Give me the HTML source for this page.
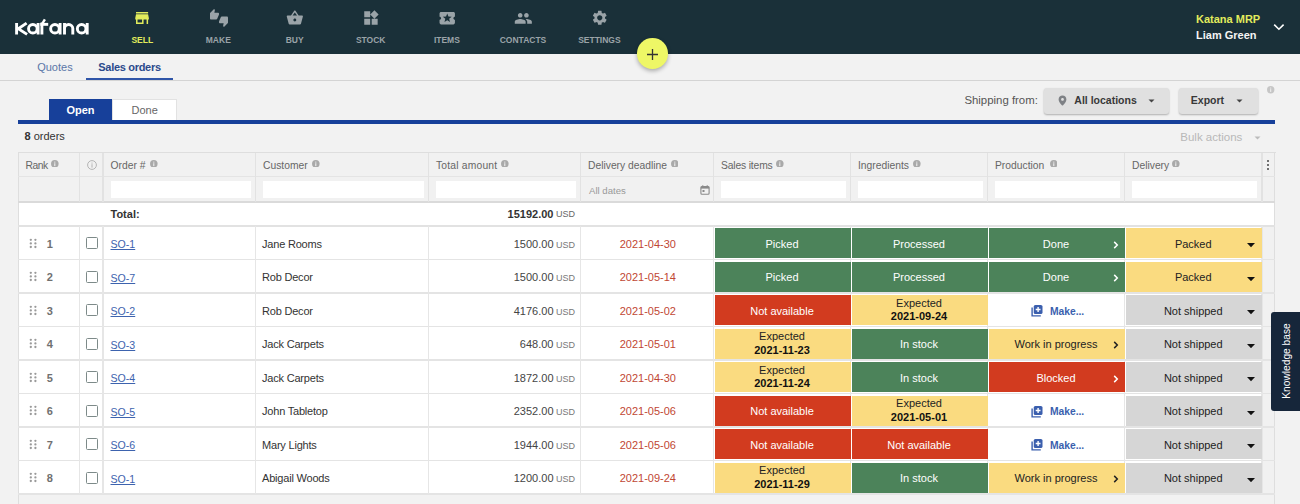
<!DOCTYPE html>
<html><head><meta charset="utf-8"><style>
*{box-sizing:border-box;margin:0;padding:0}
html,body{width:1300px;height:504px;overflow:hidden;background:#f2f2f2;font-family:"Liberation Sans", sans-serif;color:#333;position:relative}
.a{position:absolute}
.t{position:absolute;white-space:nowrap;line-height:1}
</style></head><body>
<div class="a" style="left:0.00px;top:0.00px;width:1300.00px;height:54.00px;background:#1a3039;"></div>
<svg class="a" style="left:0.00px;top:0.00px;" width="100.00" height="54.00" viewBox="0 0 100 54"><g fill="none" stroke="#fff" stroke-width="2.9">
<path d="M16.6 23V34.5"/><path d="M26.6 23.1L18.3 28.75L27.1 34.4"/>
<circle cx="32.85" cy="28.75" r="4.3"/><path d="M38.1 23V34.5"/>
<path d="M41.9 22.6V34.5"/><path d="M40.3 24.35H48.2"/><path d="M42.3 23.6L44.9 19.3" stroke-width="2.4"/>
<circle cx="54.95" cy="28.75" r="4.3"/><path d="M60.1 23V34.5"/>
<path d="M64.5 23V34.5"/><path d="M64.5 28.6A4.15 4.15 0 0 1 72.8 28.6V34.5"/>
<circle cx="81.65" cy="28.75" r="4.3"/><path d="M87.2 23V34.5"/>
</g></svg>
<svg class="a" style="left:133.40px;top:8.90px;" width="18.14" height="18.14" viewBox="0 0 24 24"><path fill="#e2ec5c" d="M20 4H4v2h16V4zm1 10v-2l-1-5H4l-1 5v2h1v6h10v-6h4v6h2v-6h1zm-9 4H6v-4h6v4z"/></svg>
<div class="t" style="left:-57.70px;width:400px;text-align:center;top:36.10px;font-size:8.5px;font-weight:700;color:#e2ec5c;">SELL</div>
<svg class="a" style="left:209.70px;top:9.00px;" width="18.00" height="18.00" viewBox="0 0 24 24"><path fill="#9aa3a8" d="M12 6c0-.55-.45-1-1-1H5.82l.66-3.18.02-.23c0-.31-.13-.59-.33-.8L5.38 0 .44 4.94C.17 5.210 0 5.59 0 6v6.5c0 .83.67 1.5 1.5 1.5h6.75c.62 0 1.15-.38 1.38-.91l2.26-5.29c.07-.17.11-.36.11-.55V6zm10.5 4h-6.75c-.62 0-1.15.38-1.38.91l-2.26 5.29c-.07.17-.11.36-.11.55V18c0 .55.45 1 1 1h5.18l-.66 3.18-.02.24c0 .31.13.59.33.8l.79.78 4.94-4.94c.27-.27.44-.65.44-1.06v-6.5c0-.83-.67-1.5-1.5-1.5z"/></svg>
<div class="t" style="left:18.30px;width:400px;text-align:center;top:36.10px;font-size:8.5px;font-weight:700;color:#9aa3a8;">MAKE</div>
<svg class="a" style="left:286.00px;top:9.00px;" width="17.66" height="17.66" viewBox="0 0 24 24"><path fill="#9aa3a8" d="M17.21 9l-4.38-6.56c-.19-.28-.51-.42-.83-.42-.32 0-.64.14-.83.43L6.790 9H2c-.55 0-1 .45-1 1 0 .09.01.18.04.27l2.54 9.27c.23.84 1 1.46 1.92 1.46h13c.92 0 1.69-.62 1.93-1.46l2.54-9.270L23 10c0-.55-.45-1-1-1h-4.79zM9 9l3-4.4L15 9H9zm3 8c-1.1 0-2-.9-2-2s.9-2 2-2 2 .9 2 2-.9 2-2 2z"/></svg>
<div class="t" style="left:94.70px;width:400px;text-align:center;top:36.10px;font-size:8.5px;font-weight:700;color:#9aa3a8;">BUY</div>
<svg class="a" style="left:361.70px;top:8.90px;" width="17.90" height="17.90" viewBox="0 0 24 24"><path fill="#9aa3a8" d="M13 13v8h8v-8h-8zM3 21h8v-8H3v8zM3 3v8h8V3H3zm13.66-1.31L11 7.34 16.66 13l5.65-5.66-5.65-5.65z"/></svg>
<div class="t" style="left:170.70px;width:400px;text-align:center;top:36.10px;font-size:8.5px;font-weight:700;color:#9aa3a8;">STOCK</div>
<svg class="a" style="left:437.90px;top:8.80px;" width="18.48" height="18.48" viewBox="0 0 24 24"><path fill="#9aa3a8" d="M20 12c0-1.1.9-2 2-2V6c0-1.1-.9-2-2-2H4c-1.1 0-1.99.9-1.99 2v4c1.1 0 1.99.9 1.99 2s-.89 2-2 2v4c0 1.1.9 2 2 2h16c1.1 0 2-.9 2-2v-4c-1.1 0-2-.9-2-2zm-4.42 4.8L12 14.5l-3.58 2.3 1.08-4.12-3.29-2.690 4.24-.25L12 5.8l1.54 3.95 4.24.25-3.29 2.69 1.09 4.11z"/></svg>
<div class="t" style="left:246.90px;width:400px;text-align:center;top:36.10px;font-size:8.5px;font-weight:700;color:#9aa3a8;">ITEMS</div>
<svg class="a" style="left:514.10px;top:8.50px;" width="18.65" height="18.65" viewBox="0 0 24 24"><path fill="#9aa3a8" d="M16 11c1.66 0 2.99-1.34 2.99-3S17.66 5 16 5c-1.66 0-3 1.34-3 3s1.34 3 3 3zm-8 0c1.66 0 2.99-1.34 2.99-3S9.66 5 8 5C6.34 5 5 6.34 5 8s1.34 3 3 3zm0 2c-2.33 0-7 1.17-7 3.5V19h14v-2.5c0-2.33-4.67-3.5-7-3.5zm8 0c-.29 0-.62.02-.97.05 1.16.84 1.97 1.970 1.97 3.45V19h6v-2.5c0-2.33-4.67-3.5-7-3.5z"/></svg>
<div class="t" style="left:323.00px;width:400px;text-align:center;top:36.10px;font-size:8.5px;font-weight:700;color:#9aa3a8;">CONTACTS</div>
<svg class="a" style="left:590.70px;top:9.20px;" width="17.52" height="17.52" viewBox="0 0 24 24"><path fill="#9aa3a8" d="M19.14 12.94c.04-.3.06-.61.06-.94 0-.32-.02-.64-.07-.94l2.03-1.58c.18-.14.23-.41.12-.61l-1.92-3.32c-.12-.22-.37-.29-.59-.22l-2.39.96c-.5-.38-1.03-.7-1.62-.94l-.36-2.54c-.04-.24-.24-.41-.48-.41h-3.84c-.24 0-.43.17-.47.41l-.36 2.54c-.59.24-1.13.57-1.62.94l-2.39-.96c-.22-.08-.47 0-.59.22L2.74 8.87c-.12.21-.08.47.12.61l2.03 1.58c-.05.3-.09.63-.09.94s.02.64.07.94l-2.03 1.58c-.18.14-.23.41-.12.61l1.92 3.32c.12.22.37.29.59.22l2.39-.96c.5.38 1.03.7 1.62.94l.36 2.54c.05.24.24.41.48.41h3.84c.24 0 .44-.17.47-.41l.36-2.54c.59-.24 1.13-.56 1.62-.94l2.39.96c.22.08.47 0 .59-.22l1.92-3.32c.12-.22.07-.47-.12-.61l-2.01-1.58zM12 15.6c-1.98 0-3.6-1.62-3.6-3.6s1.62-3.6 3.6-3.6 3.6 1.62 3.6 3.6-1.62 3.6-3.6 3.6z"/></svg>
<div class="t" style="left:399.40px;width:400px;text-align:center;top:36.10px;font-size:8.5px;font-weight:700;color:#9aa3a8;">SETTINGS</div>
<div class="t" style="left:1196.00px;top:13.89px;font-size:11px;font-weight:700;color:#e2ec5c;">Katana MRP</div>
<div class="t" style="left:1196.00px;top:29.79px;font-size:11px;font-weight:700;color:#f4f4f4;">Liam Green</div>
<svg class="a" style="left:1272.00px;top:22.00px;" width="14.00" height="10.00" viewBox="0 0 14 10"><path d="M2.2 2.6L6.9 7.2L11.6 2.6" fill="none" stroke="#fff" stroke-width="1.6"/></svg>
<div class="a" style="left:0.00px;top:80.00px;width:1300.00px;height:1.20px;background:#d4d4d4;"></div>
<div class="t" style="left:37.20px;top:61.79px;font-size:11px;font-weight:400;color:#5b77a8;">Quotes</div>
<div class="t" style="left:98.30px;top:61.79px;font-size:11px;font-weight:700;color:#2b4a8c;letter-spacing:-0.3px">Sales orders</div>
<div class="a" style="left:86.20px;top:77.70px;width:86.80px;height:2.60px;background:#2f55a8;"></div>
<div class="a" style="left:637px;top:38.4px;width:30.8px;height:30.6px;border-radius:50%;background:#eef766;box-shadow:0 2px 4px rgba(0,0,0,0.3)"></div>
<svg class="a" style="left:647.30px;top:48.80px;" width="11.00" height="11.00" viewBox="0 0 11 11"><path d="M5.5 0V11M0 5.5H11" stroke="#333" stroke-width="1.3"/></svg>
<div class="a" style="left:48.80px;top:98.90px;width:63.40px;height:23.00px;background:#17409a;"></div>
<div class="a" style="left:112.20px;top:98.90px;width:64.40px;height:22.00px;background:#fff;border:1px solid #e2e2e2;border-bottom:none"></div>
<div class="t" style="left:-119.50px;width:400px;text-align:center;top:105.09px;font-size:11px;font-weight:700;color:#fff;">Open</div>
<div class="t" style="left:-55.30px;width:400px;text-align:center;top:105.09px;font-size:11px;font-weight:400;color:#666;">Done</div>
<div class="a" style="left:18.00px;top:120.00px;width:1257.00px;height:4.00px;background:#17409a;"></div>
<div class="t" style="left:964.40px;top:94.65px;font-size:11.4px;font-weight:400;color:#555;">Shipping from:</div>
<div class="a" style="left:1043.5px;top:88.4px;width:125.5px;height:26px;border-radius:3px;background:#e0e0e0;box-shadow:0 1px 2px rgba(0,0,0,0.28)"></div>
<svg class="a" style="left:1057.50px;top:95.00px;" width="9.00" height="11.00" viewBox="0 0 9 11"><path fill="#7e8185" d="M4.5 0.5C2.3 0.5 0.6 2.2 0.6 4.4C0.6 7.3 4.5 10.6 4.5 10.6S8.4 7.3 8.4 4.4C8.4 2.2 6.7 0.5 4.5 0.5ZM4.5 5.8C3.7 5.8 3.1 5.2 3.1 4.4S3.7 3 4.5 3S5.9 3.6 5.9 4.4S5.3 5.8 4.5 5.8Z"/></svg>
<div class="t" style="left:1074.30px;top:95.41px;font-size:10.5px;font-weight:700;color:#383838;">All locations</div>
<svg class="a" style="left:1147.50px;top:98.50px;" width="7.00" height="4.00" viewBox="0 0 7 4"><path d="M0.5 0.5H6.5L3.5 3.5Z" fill="#444"/></svg>
<div class="a" style="left:1179px;top:88.4px;width:78.6px;height:26px;border-radius:3px;background:#e0e0e0;box-shadow:0 1px 2px rgba(0,0,0,0.28)"></div>
<div class="t" style="left:1190.80px;top:95.41px;font-size:10.5px;font-weight:700;color:#383838;">Export</div>
<svg class="a" style="left:1235.50px;top:98.50px;" width="7.00" height="4.00" viewBox="0 0 7 4"><path d="M0.5 0.5H6.5L3.5 3.5Z" fill="#444"/></svg>
<svg class="a" style="left:1267.30px;top:86.30px;" width="7.40" height="7.40" viewBox="0 0 8 8"><circle cx="4" cy="4" r="4" fill="#c6c6c6"/><rect x="3.45" y="3.4" width="1.1" height="3" fill="#f2f2f2"/><rect x="3.45" y="1.7" width="1.1" height="1.1" fill="#f2f2f2"/></svg>
<div class="t" style="left:24.50px;top:131.09px;font-size:11px;font-weight:400;color:#333;"><b>8</b> orders</div>
<div class="t" style="left:1180.30px;top:131.67px;font-size:11.5px;font-weight:400;color:#b8b8b8;">Bulk actions</div>
<svg class="a" style="left:1254.00px;top:136.00px;" width="7.00" height="4.00" viewBox="0 0 7 4"><path d="M0.5 0.5H6.5L3.5 3.5Z" fill="#bbb"/></svg>
<div class="a" style="left:18.00px;top:152.50px;width:1256.50px;height:49.00px;background:#f1f1f1;"></div>
<div class="a" style="left:18.00px;top:201.50px;width:1256.50px;height:292.50px;background:#fff;"></div>
<div class="a" style="left:1262.00px;top:226.00px;width:12.50px;height:268.00px;background:#f1f1f1;"></div>
<div class="a" style="left:18.00px;top:152.00px;width:1257.50px;height:1.20px;background:#dedede;"></div>
<div class="a" style="left:18.00px;top:152.00px;width:1.20px;height:352.00px;background:#dedede;"></div>
<div class="a" style="left:1274.00px;top:152.00px;width:1.20px;height:352.00px;background:#dedede;"></div>
<div class="a" style="left:18.00px;top:176.00px;width:1256.50px;height:1.20px;background:#e4e4e4;"></div>
<div class="a" style="left:18.00px;top:201.00px;width:1256.50px;height:1.50px;background:#dadada;"></div>
<div class="a" style="left:18.00px;top:225.00px;width:1256.50px;height:1.60px;background:#e2e2e2;"></div>
<div class="a" style="left:18.00px;top:258.70px;width:1256.50px;height:1.60px;background:#e4e4e4;"></div>
<div class="a" style="left:18.00px;top:292.20px;width:1256.50px;height:1.60px;background:#e4e4e4;"></div>
<div class="a" style="left:18.00px;top:325.70px;width:1256.50px;height:1.60px;background:#e4e4e4;"></div>
<div class="a" style="left:18.00px;top:359.20px;width:1256.50px;height:1.60px;background:#e4e4e4;"></div>
<div class="a" style="left:18.00px;top:392.70px;width:1256.50px;height:1.60px;background:#e4e4e4;"></div>
<div class="a" style="left:18.00px;top:426.20px;width:1256.50px;height:1.60px;background:#e4e4e4;"></div>
<div class="a" style="left:18.00px;top:459.70px;width:1256.50px;height:1.60px;background:#e4e4e4;"></div>
<div class="a" style="left:18.00px;top:493.20px;width:1256.50px;height:1.60px;background:#e4e4e4;"></div>
<div class="a" style="left:78.90px;top:152.50px;width:1.20px;height:49.00px;background:#e2e2e2;"></div>
<div class="a" style="left:102.40px;top:152.50px;width:1.20px;height:49.00px;background:#e2e2e2;"></div>
<div class="a" style="left:254.90px;top:152.50px;width:1.20px;height:49.00px;background:#e2e2e2;"></div>
<div class="a" style="left:427.90px;top:152.50px;width:1.20px;height:49.00px;background:#e2e2e2;"></div>
<div class="a" style="left:579.90px;top:152.50px;width:1.20px;height:49.00px;background:#e2e2e2;"></div>
<div class="a" style="left:712.90px;top:152.50px;width:1.20px;height:49.00px;background:#e2e2e2;"></div>
<div class="a" style="left:849.90px;top:152.50px;width:1.20px;height:49.00px;background:#e2e2e2;"></div>
<div class="a" style="left:986.90px;top:152.50px;width:1.20px;height:49.00px;background:#e2e2e2;"></div>
<div class="a" style="left:1123.90px;top:152.50px;width:1.20px;height:49.00px;background:#e2e2e2;"></div>
<div class="a" style="left:1261.40px;top:152.50px;width:1.20px;height:49.00px;background:#e2e2e2;"></div>
<div class="a" style="left:78.90px;top:226.00px;width:1.20px;height:268.00px;background:#e6e6e6;"></div>
<div class="a" style="left:102.40px;top:226.00px;width:1.20px;height:268.00px;background:#e6e6e6;"></div>
<div class="a" style="left:254.90px;top:226.00px;width:1.20px;height:268.00px;background:#e6e6e6;"></div>
<div class="a" style="left:427.90px;top:226.00px;width:1.20px;height:268.00px;background:#e6e6e6;"></div>
<div class="a" style="left:579.90px;top:226.00px;width:1.20px;height:268.00px;background:#e6e6e6;"></div>
<div class="a" style="left:712.90px;top:226.00px;width:1.20px;height:268.00px;background:#e6e6e6;"></div>
<div class="a" style="left:849.90px;top:226.00px;width:1.20px;height:268.00px;background:#e6e6e6;"></div>
<div class="a" style="left:986.90px;top:226.00px;width:1.20px;height:268.00px;background:#e6e6e6;"></div>
<div class="a" style="left:1123.90px;top:226.00px;width:1.20px;height:268.00px;background:#e6e6e6;"></div>
<div class="a" style="left:1261.40px;top:226.00px;width:1.20px;height:268.00px;background:#e6e6e6;"></div>
<div class="t" style="left:25.50px;top:161.08px;font-size:10.3px;color:#666;letter-spacing:-0.45px">Rank</div>
<svg class="a" style="left:51.30px;top:159.50px;" width="7.60" height="7.60" viewBox="0 0 8 8"><circle cx="4" cy="4" r="4" fill="#a9a9a9"/><rect x="3.45" y="3.4" width="1.1" height="3" fill="#f1f1f1"/><rect x="3.45" y="1.7" width="1.1" height="1.1" fill="#f1f1f1"/></svg>
<svg class="a" style="left:87.00px;top:160.40px;" width="10.00" height="10.00" viewBox="0 0 10 10"><circle cx="5" cy="5" r="4.4" fill="none" stroke="#b4b4b4" stroke-width="1"/><rect x="4.5" y="4.2" width="1" height="3.4" fill="#b4b4b4"/><rect x="4.5" y="2.6" width="1" height="1" fill="#b4b4b4"/></svg>
<div class="t" style="left:110.50px;top:161.08px;font-size:10.3px;color:#666;letter-spacing:0px">Order #</div>
<svg class="a" style="left:150.20px;top:159.50px;" width="7.60" height="7.60" viewBox="0 0 8 8"><circle cx="4" cy="4" r="4" fill="#a9a9a9"/><rect x="3.45" y="3.4" width="1.1" height="3" fill="#f1f1f1"/><rect x="3.45" y="1.7" width="1.1" height="1.1" fill="#f1f1f1"/></svg>
<div class="t" style="left:263.00px;top:161.08px;font-size:10.3px;color:#666;letter-spacing:0px">Customer</div>
<svg class="a" style="left:312.00px;top:159.50px;" width="7.60" height="7.60" viewBox="0 0 8 8"><circle cx="4" cy="4" r="4" fill="#a9a9a9"/><rect x="3.45" y="3.4" width="1.1" height="3" fill="#f1f1f1"/><rect x="3.45" y="1.7" width="1.1" height="1.1" fill="#f1f1f1"/></svg>
<div class="t" style="left:436.00px;top:161.08px;font-size:10.3px;color:#666;letter-spacing:0.2px">Total amount</div>
<svg class="a" style="left:501.20px;top:159.50px;" width="7.60" height="7.60" viewBox="0 0 8 8"><circle cx="4" cy="4" r="4" fill="#a9a9a9"/><rect x="3.45" y="3.4" width="1.1" height="3" fill="#f1f1f1"/><rect x="3.45" y="1.7" width="1.1" height="1.1" fill="#f1f1f1"/></svg>
<div class="t" style="left:588.00px;top:161.08px;font-size:10.3px;color:#666;letter-spacing:0px">Delivery deadline</div>
<svg class="a" style="left:670.90px;top:159.50px;" width="7.60" height="7.60" viewBox="0 0 8 8"><circle cx="4" cy="4" r="4" fill="#a9a9a9"/><rect x="3.45" y="3.4" width="1.1" height="3" fill="#f1f1f1"/><rect x="3.45" y="1.7" width="1.1" height="1.1" fill="#f1f1f1"/></svg>
<div class="t" style="left:721.00px;top:161.08px;font-size:10.3px;color:#666;letter-spacing:-0.15px">Sales items</div>
<svg class="a" style="left:775.95px;top:159.50px;" width="7.60" height="7.60" viewBox="0 0 8 8"><circle cx="4" cy="4" r="4" fill="#a9a9a9"/><rect x="3.45" y="3.4" width="1.1" height="3" fill="#f1f1f1"/><rect x="3.45" y="1.7" width="1.1" height="1.1" fill="#f1f1f1"/></svg>
<div class="t" style="left:858.00px;top:161.08px;font-size:10.3px;color:#666;letter-spacing:0px">Ingredients</div>
<svg class="a" style="left:913.10px;top:159.50px;" width="7.60" height="7.60" viewBox="0 0 8 8"><circle cx="4" cy="4" r="4" fill="#a9a9a9"/><rect x="3.45" y="3.4" width="1.1" height="3" fill="#f1f1f1"/><rect x="3.45" y="1.7" width="1.1" height="1.1" fill="#f1f1f1"/></svg>
<div class="t" style="left:995.00px;top:161.08px;font-size:10.3px;color:#666;letter-spacing:0px">Production</div>
<svg class="a" style="left:1049.50px;top:159.50px;" width="7.60" height="7.60" viewBox="0 0 8 8"><circle cx="4" cy="4" r="4" fill="#a9a9a9"/><rect x="3.45" y="3.4" width="1.1" height="3" fill="#f1f1f1"/><rect x="3.45" y="1.7" width="1.1" height="1.1" fill="#f1f1f1"/></svg>
<div class="t" style="left:1132.00px;top:161.08px;font-size:10.3px;color:#666;letter-spacing:0px">Delivery</div>
<svg class="a" style="left:1172.45px;top:159.50px;" width="7.60" height="7.60" viewBox="0 0 8 8"><circle cx="4" cy="4" r="4" fill="#a9a9a9"/><rect x="3.45" y="3.4" width="1.1" height="3" fill="#f1f1f1"/><rect x="3.45" y="1.7" width="1.1" height="1.1" fill="#f1f1f1"/></svg>
<div class="a" style="left:1266.8px;top:160.0px;width:2.4px;height:2.4px;border-radius:50%;background:#444"></div>
<div class="a" style="left:1266.8px;top:164.0px;width:2.4px;height:2.4px;border-radius:50%;background:#444"></div>
<div class="a" style="left:1266.8px;top:168.0px;width:2.4px;height:2.4px;border-radius:50%;background:#444"></div>
<div class="a" style="left:110.50px;top:181.00px;width:140.00px;height:16.50px;background:#fff;"></div>
<div class="a" style="left:263.00px;top:181.00px;width:160.50px;height:16.50px;background:#fff;"></div>
<div class="a" style="left:436.00px;top:181.00px;width:139.50px;height:16.50px;background:#fff;"></div>
<div class="a" style="left:721.00px;top:181.00px;width:124.50px;height:16.50px;background:#fff;"></div>
<div class="a" style="left:858.00px;top:181.00px;width:124.50px;height:16.50px;background:#fff;"></div>
<div class="a" style="left:995.00px;top:181.00px;width:124.50px;height:16.50px;background:#fff;"></div>
<div class="a" style="left:1132.00px;top:181.00px;width:125.00px;height:16.50px;background:#fff;"></div>
<div class="t" style="left:589.00px;top:186.07px;font-size:9.6px;font-weight:400;color:#999;">All dates</div>
<svg class="a" style="left:699.50px;top:185.00px;" width="10.00" height="10.00" viewBox="0 0 10 10"><rect x="0.9" y="1.6" width="8.2" height="7.6" rx="1" fill="none" stroke="#8a8a8a" stroke-width="1.1"/><rect x="0.9" y="1.6" width="8.2" height="2" fill="#8a8a8a"/><rect x="2.3" y="0.2" width="1" height="2" fill="#8a8a8a"/><rect x="6.7" y="0.2" width="1" height="2" fill="#8a8a8a"/><rect x="2.5" y="5" width="2" height="2" fill="#8a8a8a"/></svg>
<div class="t" style="left:110.50px;top:208.79px;font-size:11px;font-weight:700;color:#333;">Total:</div>
<div class="t" style="left:153.50px;width:400px;text-align:right;top:208.79px;font-size:11px;font-weight:700;color:#333;">15192.00</div>
<div class="t" style="left:175.00px;width:400px;text-align:right;top:210.48px;font-size:9px;font-weight:400;color:#666;">USD</div>
<svg class="a" style="left:28.50px;top:237.80px;" width="9.00" height="11.00" viewBox="0 0 9 11"><g fill="#9a9a9a"><circle cx="1.8" cy="1.8" r="1.15"/><circle cx="6.4" cy="1.8" r="1.15"/><circle cx="1.8" cy="5.4" r="1.15"/><circle cx="6.4" cy="5.4" r="1.15"/><circle cx="1.8" cy="9" r="1.15"/><circle cx="6.4" cy="9" r="1.15"/></g></svg>
<div class="t" style="left:46.80px;top:238.99px;font-size:11px;font-weight:700;color:#707070;">1</div>
<div class="a" style="left:86px;top:237.2px;width:12.2px;height:12px;border:1.5px solid #7d8a89;border-radius:1.5px"></div>
<div class="t" style="left:110.50px;top:239.33px;font-size:10.6px;font-weight:400;color:#3d63ae;text-decoration:underline;text-underline-offset:1.2px;text-decoration-thickness:1px">SO-1</div>
<div class="t" style="left:262.00px;top:238.99px;font-size:11px;font-weight:400;color:#333;letter-spacing:-0.2px">Jane Rooms</div>
<div class="t" style="left:153.50px;width:400px;text-align:right;top:238.99px;font-size:11px;font-weight:400;color:#444;">1500.00</div>
<div class="t" style="left:175.00px;width:400px;text-align:right;top:240.68px;font-size:9px;font-weight:400;color:#777;">USD</div>
<div class="t" style="left:447.80px;width:400px;text-align:center;top:238.99px;font-size:11px;font-weight:400;color:#bf4733;">2021-04-30</div>
<div class="a" style="left:715.00px;top:228.00px;width:135.70px;height:30.30px;background:#4c835a;"></div>
<div class="t" style="left:582.00px;width:400px;text-align:center;top:238.99px;font-size:11px;font-weight:400;color:#fff;">Picked</div>
<div class="a" style="left:852.00px;top:228.00px;width:135.70px;height:30.30px;background:#4c835a;"></div>
<div class="t" style="left:719.00px;width:400px;text-align:center;top:238.99px;font-size:11px;font-weight:400;color:#fff;">Processed</div>
<div class="a" style="left:989.00px;top:228.00px;width:135.70px;height:30.30px;background:#4c835a;"></div>
<div class="t" style="left:856.00px;width:400px;text-align:center;top:238.99px;font-size:11px;font-weight:400;color:#fff;">Done</div>
<svg class="a" style="left:1113.40px;top:240.50px;" width="6.00" height="8.00" viewBox="0 0 6 8"><path d="M1.2 0.9L4.3 4L1.2 7.1" fill="none" stroke="#fff" stroke-width="1.5"/></svg>
<div class="a" style="left:1126.00px;top:228.00px;width:136.20px;height:30.30px;background:#fadb80;"></div>
<div class="t" style="left:993.25px;width:400px;text-align:center;top:238.99px;font-size:11px;font-weight:400;color:#222;">Packed</div>
<svg class="a" style="left:1247.00px;top:243.00px;" width="8.00" height="4.50" viewBox="0 0 8 4.5"><path d="M0 0H8L4 4.2Z" fill="#111"/></svg>
<svg class="a" style="left:28.50px;top:271.30px;" width="9.00" height="11.00" viewBox="0 0 9 11"><g fill="#9a9a9a"><circle cx="1.8" cy="1.8" r="1.15"/><circle cx="6.4" cy="1.8" r="1.15"/><circle cx="1.8" cy="5.4" r="1.15"/><circle cx="6.4" cy="5.4" r="1.15"/><circle cx="1.8" cy="9" r="1.15"/><circle cx="6.4" cy="9" r="1.15"/></g></svg>
<div class="t" style="left:46.80px;top:272.49px;font-size:11px;font-weight:700;color:#707070;">2</div>
<div class="a" style="left:86px;top:270.7px;width:12.2px;height:12px;border:1.5px solid #7d8a89;border-radius:1.5px"></div>
<div class="t" style="left:110.50px;top:272.83px;font-size:10.6px;font-weight:400;color:#3d63ae;text-decoration:underline;text-underline-offset:1.2px;text-decoration-thickness:1px">SO-7</div>
<div class="t" style="left:262.00px;top:272.49px;font-size:11px;font-weight:400;color:#333;letter-spacing:-0.2px">Rob Decor</div>
<div class="t" style="left:153.50px;width:400px;text-align:right;top:272.49px;font-size:11px;font-weight:400;color:#444;">1500.00</div>
<div class="t" style="left:175.00px;width:400px;text-align:right;top:274.18px;font-size:9px;font-weight:400;color:#777;">USD</div>
<div class="t" style="left:447.80px;width:400px;text-align:center;top:272.49px;font-size:11px;font-weight:400;color:#bf4733;">2021-05-14</div>
<div class="a" style="left:715.00px;top:261.50px;width:135.70px;height:30.30px;background:#4c835a;"></div>
<div class="t" style="left:582.00px;width:400px;text-align:center;top:272.49px;font-size:11px;font-weight:400;color:#fff;">Picked</div>
<div class="a" style="left:852.00px;top:261.50px;width:135.70px;height:30.30px;background:#4c835a;"></div>
<div class="t" style="left:719.00px;width:400px;text-align:center;top:272.49px;font-size:11px;font-weight:400;color:#fff;">Processed</div>
<div class="a" style="left:989.00px;top:261.50px;width:135.70px;height:30.30px;background:#4c835a;"></div>
<div class="t" style="left:856.00px;width:400px;text-align:center;top:272.49px;font-size:11px;font-weight:400;color:#fff;">Done</div>
<svg class="a" style="left:1113.40px;top:274.00px;" width="6.00" height="8.00" viewBox="0 0 6 8"><path d="M1.2 0.9L4.3 4L1.2 7.1" fill="none" stroke="#fff" stroke-width="1.5"/></svg>
<div class="a" style="left:1126.00px;top:261.50px;width:136.20px;height:30.30px;background:#fadb80;"></div>
<div class="t" style="left:993.25px;width:400px;text-align:center;top:272.49px;font-size:11px;font-weight:400;color:#222;">Packed</div>
<svg class="a" style="left:1247.00px;top:276.50px;" width="8.00" height="4.50" viewBox="0 0 8 4.5"><path d="M0 0H8L4 4.2Z" fill="#111"/></svg>
<svg class="a" style="left:28.50px;top:304.80px;" width="9.00" height="11.00" viewBox="0 0 9 11"><g fill="#9a9a9a"><circle cx="1.8" cy="1.8" r="1.15"/><circle cx="6.4" cy="1.8" r="1.15"/><circle cx="1.8" cy="5.4" r="1.15"/><circle cx="6.4" cy="5.4" r="1.15"/><circle cx="1.8" cy="9" r="1.15"/><circle cx="6.4" cy="9" r="1.15"/></g></svg>
<div class="t" style="left:46.80px;top:305.99px;font-size:11px;font-weight:700;color:#707070;">3</div>
<div class="a" style="left:86px;top:304.2px;width:12.2px;height:12px;border:1.5px solid #7d8a89;border-radius:1.5px"></div>
<div class="t" style="left:110.50px;top:306.33px;font-size:10.6px;font-weight:400;color:#3d63ae;text-decoration:underline;text-underline-offset:1.2px;text-decoration-thickness:1px">SO-2</div>
<div class="t" style="left:262.00px;top:305.99px;font-size:11px;font-weight:400;color:#333;letter-spacing:-0.2px">Rob Decor</div>
<div class="t" style="left:153.50px;width:400px;text-align:right;top:305.99px;font-size:11px;font-weight:400;color:#444;">4176.00</div>
<div class="t" style="left:175.00px;width:400px;text-align:right;top:307.68px;font-size:9px;font-weight:400;color:#777;">USD</div>
<div class="t" style="left:447.80px;width:400px;text-align:center;top:305.99px;font-size:11px;font-weight:400;color:#bf4733;">2021-05-02</div>
<div class="a" style="left:715.00px;top:295.00px;width:135.70px;height:30.30px;background:#d23b1f;"></div>
<div class="t" style="left:582.00px;width:400px;text-align:center;top:305.99px;font-size:11px;font-weight:400;color:#fff;">Not available</div>
<div class="a" style="left:852.00px;top:295.00px;width:135.70px;height:30.30px;background:#fadb80;"></div>
<div class="t" style="left:719.00px;width:400px;text-align:center;top:297.59px;font-size:11px;font-weight:400;color:#222;">Expected</div>
<div class="t" style="left:719.00px;width:400px;text-align:center;top:311.29px;font-size:11px;font-weight:700;color:#111;">2021-09-24</div>
<svg class="a" style="left:1030.50px;top:305.30px;" width="12.50" height="12.00" viewBox="0 0 12.5 12"><path d="M1.1 2.4V10.9H9.8" fill="none" stroke="#3b5fae" stroke-width="1.4"/><rect x="2.75" y="0" width="8.75" height="9" rx="1.6" fill="#3b5fae"/><path d="M7.1 2.1V6.9M4.7 4.5H9.5" stroke="#fff" stroke-width="1.4"/></svg>
<div class="t" style="left:1049.90px;top:306.58px;font-size:10.3px;font-weight:700;color:#3b5fae;">Make...</div>
<div class="a" style="left:1126.00px;top:295.00px;width:136.20px;height:30.30px;background:#d6d6d6;"></div>
<div class="t" style="left:993.25px;width:400px;text-align:center;top:305.99px;font-size:11px;font-weight:400;color:#222;">Not shipped</div>
<svg class="a" style="left:1247.00px;top:310.00px;" width="8.00" height="4.50" viewBox="0 0 8 4.5"><path d="M0 0H8L4 4.2Z" fill="#111"/></svg>
<svg class="a" style="left:28.50px;top:338.30px;" width="9.00" height="11.00" viewBox="0 0 9 11"><g fill="#9a9a9a"><circle cx="1.8" cy="1.8" r="1.15"/><circle cx="6.4" cy="1.8" r="1.15"/><circle cx="1.8" cy="5.4" r="1.15"/><circle cx="6.4" cy="5.4" r="1.15"/><circle cx="1.8" cy="9" r="1.15"/><circle cx="6.4" cy="9" r="1.15"/></g></svg>
<div class="t" style="left:46.80px;top:339.49px;font-size:11px;font-weight:700;color:#707070;">4</div>
<div class="a" style="left:86px;top:337.7px;width:12.2px;height:12px;border:1.5px solid #7d8a89;border-radius:1.5px"></div>
<div class="t" style="left:110.50px;top:339.83px;font-size:10.6px;font-weight:400;color:#3d63ae;text-decoration:underline;text-underline-offset:1.2px;text-decoration-thickness:1px">SO-3</div>
<div class="t" style="left:262.00px;top:339.49px;font-size:11px;font-weight:400;color:#333;letter-spacing:-0.2px">Jack Carpets</div>
<div class="t" style="left:153.50px;width:400px;text-align:right;top:339.49px;font-size:11px;font-weight:400;color:#444;">648.00</div>
<div class="t" style="left:175.00px;width:400px;text-align:right;top:341.18px;font-size:9px;font-weight:400;color:#777;">USD</div>
<div class="t" style="left:447.80px;width:400px;text-align:center;top:339.49px;font-size:11px;font-weight:400;color:#bf4733;">2021-05-01</div>
<div class="a" style="left:715.00px;top:328.50px;width:135.70px;height:30.30px;background:#fadb80;"></div>
<div class="t" style="left:582.00px;width:400px;text-align:center;top:331.09px;font-size:11px;font-weight:400;color:#222;">Expected</div>
<div class="t" style="left:582.00px;width:400px;text-align:center;top:344.79px;font-size:11px;font-weight:700;color:#111;">2021-11-23</div>
<div class="a" style="left:852.00px;top:328.50px;width:135.70px;height:30.30px;background:#4c835a;"></div>
<div class="t" style="left:719.00px;width:400px;text-align:center;top:339.49px;font-size:11px;font-weight:400;color:#fff;">In stock</div>
<div class="a" style="left:989.00px;top:328.50px;width:135.70px;height:30.30px;background:#fadb80;"></div>
<div class="t" style="left:856.00px;width:400px;text-align:center;top:339.49px;font-size:11px;font-weight:400;color:#222;">Work in progress</div>
<svg class="a" style="left:1113.40px;top:341.00px;" width="6.00" height="8.00" viewBox="0 0 6 8"><path d="M1.2 0.9L4.3 4L1.2 7.1" fill="none" stroke="#222" stroke-width="1.5"/></svg>
<div class="a" style="left:1126.00px;top:328.50px;width:136.20px;height:30.30px;background:#d6d6d6;"></div>
<div class="t" style="left:993.25px;width:400px;text-align:center;top:339.49px;font-size:11px;font-weight:400;color:#222;">Not shipped</div>
<svg class="a" style="left:1247.00px;top:343.50px;" width="8.00" height="4.50" viewBox="0 0 8 4.5"><path d="M0 0H8L4 4.2Z" fill="#111"/></svg>
<svg class="a" style="left:28.50px;top:371.80px;" width="9.00" height="11.00" viewBox="0 0 9 11"><g fill="#9a9a9a"><circle cx="1.8" cy="1.8" r="1.15"/><circle cx="6.4" cy="1.8" r="1.15"/><circle cx="1.8" cy="5.4" r="1.15"/><circle cx="6.4" cy="5.4" r="1.15"/><circle cx="1.8" cy="9" r="1.15"/><circle cx="6.4" cy="9" r="1.15"/></g></svg>
<div class="t" style="left:46.80px;top:372.99px;font-size:11px;font-weight:700;color:#707070;">5</div>
<div class="a" style="left:86px;top:371.2px;width:12.2px;height:12px;border:1.5px solid #7d8a89;border-radius:1.5px"></div>
<div class="t" style="left:110.50px;top:373.33px;font-size:10.6px;font-weight:400;color:#3d63ae;text-decoration:underline;text-underline-offset:1.2px;text-decoration-thickness:1px">SO-4</div>
<div class="t" style="left:262.00px;top:372.99px;font-size:11px;font-weight:400;color:#333;letter-spacing:-0.2px">Jack Carpets</div>
<div class="t" style="left:153.50px;width:400px;text-align:right;top:372.99px;font-size:11px;font-weight:400;color:#444;">1872.00</div>
<div class="t" style="left:175.00px;width:400px;text-align:right;top:374.68px;font-size:9px;font-weight:400;color:#777;">USD</div>
<div class="t" style="left:447.80px;width:400px;text-align:center;top:372.99px;font-size:11px;font-weight:400;color:#bf4733;">2021-04-30</div>
<div class="a" style="left:715.00px;top:362.00px;width:135.70px;height:30.30px;background:#fadb80;"></div>
<div class="t" style="left:582.00px;width:400px;text-align:center;top:364.59px;font-size:11px;font-weight:400;color:#222;">Expected</div>
<div class="t" style="left:582.00px;width:400px;text-align:center;top:378.29px;font-size:11px;font-weight:700;color:#111;">2021-11-24</div>
<div class="a" style="left:852.00px;top:362.00px;width:135.70px;height:30.30px;background:#4c835a;"></div>
<div class="t" style="left:719.00px;width:400px;text-align:center;top:372.99px;font-size:11px;font-weight:400;color:#fff;">In stock</div>
<div class="a" style="left:989.00px;top:362.00px;width:135.70px;height:30.30px;background:#d23b1f;"></div>
<div class="t" style="left:856.00px;width:400px;text-align:center;top:372.99px;font-size:11px;font-weight:400;color:#fff;">Blocked</div>
<svg class="a" style="left:1113.40px;top:374.50px;" width="6.00" height="8.00" viewBox="0 0 6 8"><path d="M1.2 0.9L4.3 4L1.2 7.1" fill="none" stroke="#fff" stroke-width="1.5"/></svg>
<div class="a" style="left:1126.00px;top:362.00px;width:136.20px;height:30.30px;background:#d6d6d6;"></div>
<div class="t" style="left:993.25px;width:400px;text-align:center;top:372.99px;font-size:11px;font-weight:400;color:#222;">Not shipped</div>
<svg class="a" style="left:1247.00px;top:377.00px;" width="8.00" height="4.50" viewBox="0 0 8 4.5"><path d="M0 0H8L4 4.2Z" fill="#111"/></svg>
<svg class="a" style="left:28.50px;top:405.30px;" width="9.00" height="11.00" viewBox="0 0 9 11"><g fill="#9a9a9a"><circle cx="1.8" cy="1.8" r="1.15"/><circle cx="6.4" cy="1.8" r="1.15"/><circle cx="1.8" cy="5.4" r="1.15"/><circle cx="6.4" cy="5.4" r="1.15"/><circle cx="1.8" cy="9" r="1.15"/><circle cx="6.4" cy="9" r="1.15"/></g></svg>
<div class="t" style="left:46.80px;top:406.49px;font-size:11px;font-weight:700;color:#707070;">6</div>
<div class="a" style="left:86px;top:404.7px;width:12.2px;height:12px;border:1.5px solid #7d8a89;border-radius:1.5px"></div>
<div class="t" style="left:110.50px;top:406.83px;font-size:10.6px;font-weight:400;color:#3d63ae;text-decoration:underline;text-underline-offset:1.2px;text-decoration-thickness:1px">SO-5</div>
<div class="t" style="left:262.00px;top:406.49px;font-size:11px;font-weight:400;color:#333;letter-spacing:-0.2px">John Tabletop</div>
<div class="t" style="left:153.50px;width:400px;text-align:right;top:406.49px;font-size:11px;font-weight:400;color:#444;">2352.00</div>
<div class="t" style="left:175.00px;width:400px;text-align:right;top:408.18px;font-size:9px;font-weight:400;color:#777;">USD</div>
<div class="t" style="left:447.80px;width:400px;text-align:center;top:406.49px;font-size:11px;font-weight:400;color:#bf4733;">2021-05-06</div>
<div class="a" style="left:715.00px;top:395.50px;width:135.70px;height:30.30px;background:#d23b1f;"></div>
<div class="t" style="left:582.00px;width:400px;text-align:center;top:406.49px;font-size:11px;font-weight:400;color:#fff;">Not available</div>
<div class="a" style="left:852.00px;top:395.50px;width:135.70px;height:30.30px;background:#fadb80;"></div>
<div class="t" style="left:719.00px;width:400px;text-align:center;top:398.09px;font-size:11px;font-weight:400;color:#222;">Expected</div>
<div class="t" style="left:719.00px;width:400px;text-align:center;top:411.79px;font-size:11px;font-weight:700;color:#111;">2021-05-01</div>
<svg class="a" style="left:1030.50px;top:405.80px;" width="12.50" height="12.00" viewBox="0 0 12.5 12"><path d="M1.1 2.4V10.9H9.8" fill="none" stroke="#3b5fae" stroke-width="1.4"/><rect x="2.75" y="0" width="8.75" height="9" rx="1.6" fill="#3b5fae"/><path d="M7.1 2.1V6.9M4.7 4.5H9.5" stroke="#fff" stroke-width="1.4"/></svg>
<div class="t" style="left:1049.90px;top:407.08px;font-size:10.3px;font-weight:700;color:#3b5fae;">Make...</div>
<div class="a" style="left:1126.00px;top:395.50px;width:136.20px;height:30.30px;background:#d6d6d6;"></div>
<div class="t" style="left:993.25px;width:400px;text-align:center;top:406.49px;font-size:11px;font-weight:400;color:#222;">Not shipped</div>
<svg class="a" style="left:1247.00px;top:410.50px;" width="8.00" height="4.50" viewBox="0 0 8 4.5"><path d="M0 0H8L4 4.2Z" fill="#111"/></svg>
<svg class="a" style="left:28.50px;top:438.80px;" width="9.00" height="11.00" viewBox="0 0 9 11"><g fill="#9a9a9a"><circle cx="1.8" cy="1.8" r="1.15"/><circle cx="6.4" cy="1.8" r="1.15"/><circle cx="1.8" cy="5.4" r="1.15"/><circle cx="6.4" cy="5.4" r="1.15"/><circle cx="1.8" cy="9" r="1.15"/><circle cx="6.4" cy="9" r="1.15"/></g></svg>
<div class="t" style="left:46.80px;top:439.99px;font-size:11px;font-weight:700;color:#707070;">7</div>
<div class="a" style="left:86px;top:438.2px;width:12.2px;height:12px;border:1.5px solid #7d8a89;border-radius:1.5px"></div>
<div class="t" style="left:110.50px;top:440.33px;font-size:10.6px;font-weight:400;color:#3d63ae;text-decoration:underline;text-underline-offset:1.2px;text-decoration-thickness:1px">SO-6</div>
<div class="t" style="left:262.00px;top:439.99px;font-size:11px;font-weight:400;color:#333;letter-spacing:-0.2px">Mary Lights</div>
<div class="t" style="left:153.50px;width:400px;text-align:right;top:439.99px;font-size:11px;font-weight:400;color:#444;">1944.00</div>
<div class="t" style="left:175.00px;width:400px;text-align:right;top:441.68px;font-size:9px;font-weight:400;color:#777;">USD</div>
<div class="t" style="left:447.80px;width:400px;text-align:center;top:439.99px;font-size:11px;font-weight:400;color:#bf4733;">2021-05-06</div>
<div class="a" style="left:715.00px;top:429.00px;width:135.70px;height:30.30px;background:#d23b1f;"></div>
<div class="t" style="left:582.00px;width:400px;text-align:center;top:439.99px;font-size:11px;font-weight:400;color:#fff;">Not available</div>
<div class="a" style="left:852.00px;top:429.00px;width:135.70px;height:30.30px;background:#d23b1f;"></div>
<div class="t" style="left:719.00px;width:400px;text-align:center;top:439.99px;font-size:11px;font-weight:400;color:#fff;">Not available</div>
<svg class="a" style="left:1030.50px;top:439.30px;" width="12.50" height="12.00" viewBox="0 0 12.5 12"><path d="M1.1 2.4V10.9H9.8" fill="none" stroke="#3b5fae" stroke-width="1.4"/><rect x="2.75" y="0" width="8.75" height="9" rx="1.6" fill="#3b5fae"/><path d="M7.1 2.1V6.9M4.7 4.5H9.5" stroke="#fff" stroke-width="1.4"/></svg>
<div class="t" style="left:1049.90px;top:440.58px;font-size:10.3px;font-weight:700;color:#3b5fae;">Make...</div>
<div class="a" style="left:1126.00px;top:429.00px;width:136.20px;height:30.30px;background:#d6d6d6;"></div>
<div class="t" style="left:993.25px;width:400px;text-align:center;top:439.99px;font-size:11px;font-weight:400;color:#222;">Not shipped</div>
<svg class="a" style="left:1247.00px;top:444.00px;" width="8.00" height="4.50" viewBox="0 0 8 4.5"><path d="M0 0H8L4 4.2Z" fill="#111"/></svg>
<svg class="a" style="left:28.50px;top:472.30px;" width="9.00" height="11.00" viewBox="0 0 9 11"><g fill="#9a9a9a"><circle cx="1.8" cy="1.8" r="1.15"/><circle cx="6.4" cy="1.8" r="1.15"/><circle cx="1.8" cy="5.4" r="1.15"/><circle cx="6.4" cy="5.4" r="1.15"/><circle cx="1.8" cy="9" r="1.15"/><circle cx="6.4" cy="9" r="1.15"/></g></svg>
<div class="t" style="left:46.80px;top:473.49px;font-size:11px;font-weight:700;color:#707070;">8</div>
<div class="a" style="left:86px;top:471.7px;width:12.2px;height:12px;border:1.5px solid #7d8a89;border-radius:1.5px"></div>
<div class="t" style="left:110.50px;top:473.83px;font-size:10.6px;font-weight:400;color:#3d63ae;text-decoration:underline;text-underline-offset:1.2px;text-decoration-thickness:1px">SO-1</div>
<div class="t" style="left:262.00px;top:473.49px;font-size:11px;font-weight:400;color:#333;letter-spacing:-0.2px">Abigail Woods</div>
<div class="t" style="left:153.50px;width:400px;text-align:right;top:473.49px;font-size:11px;font-weight:400;color:#444;">1200.00</div>
<div class="t" style="left:175.00px;width:400px;text-align:right;top:475.18px;font-size:9px;font-weight:400;color:#777;">USD</div>
<div class="t" style="left:447.80px;width:400px;text-align:center;top:473.49px;font-size:11px;font-weight:400;color:#bf4733;">2021-09-24</div>
<div class="a" style="left:715.00px;top:462.50px;width:135.70px;height:30.30px;background:#fadb80;"></div>
<div class="t" style="left:582.00px;width:400px;text-align:center;top:465.09px;font-size:11px;font-weight:400;color:#222;">Expected</div>
<div class="t" style="left:582.00px;width:400px;text-align:center;top:478.79px;font-size:11px;font-weight:700;color:#111;">2021-11-29</div>
<div class="a" style="left:852.00px;top:462.50px;width:135.70px;height:30.30px;background:#4c835a;"></div>
<div class="t" style="left:719.00px;width:400px;text-align:center;top:473.49px;font-size:11px;font-weight:400;color:#fff;">In stock</div>
<div class="a" style="left:989.00px;top:462.50px;width:135.70px;height:30.30px;background:#fadb80;"></div>
<div class="t" style="left:856.00px;width:400px;text-align:center;top:473.49px;font-size:11px;font-weight:400;color:#222;">Work in progress</div>
<svg class="a" style="left:1113.40px;top:475.00px;" width="6.00" height="8.00" viewBox="0 0 6 8"><path d="M1.2 0.9L4.3 4L1.2 7.1" fill="none" stroke="#222" stroke-width="1.5"/></svg>
<div class="a" style="left:1126.00px;top:462.50px;width:136.20px;height:30.30px;background:#d6d6d6;"></div>
<div class="t" style="left:993.25px;width:400px;text-align:center;top:473.49px;font-size:11px;font-weight:400;color:#222;">Not shipped</div>
<svg class="a" style="left:1247.00px;top:477.50px;" width="8.00" height="4.50" viewBox="0 0 8 4.5"><path d="M0 0H8L4 4.2Z" fill="#111"/></svg>
<div class="a" style="left:1271.2px;top:312.4px;width:40px;height:98.3px;background:#16263a;border-radius:3px 0 0 3px"></div>
<div class="t" style="left:1237.2px;top:355.3px;width:100px;height:12px;text-align:center;font-size:10.2px;color:#fff;transform:rotate(-90deg);line-height:12px">Knowledge base</div>
</body></html>
